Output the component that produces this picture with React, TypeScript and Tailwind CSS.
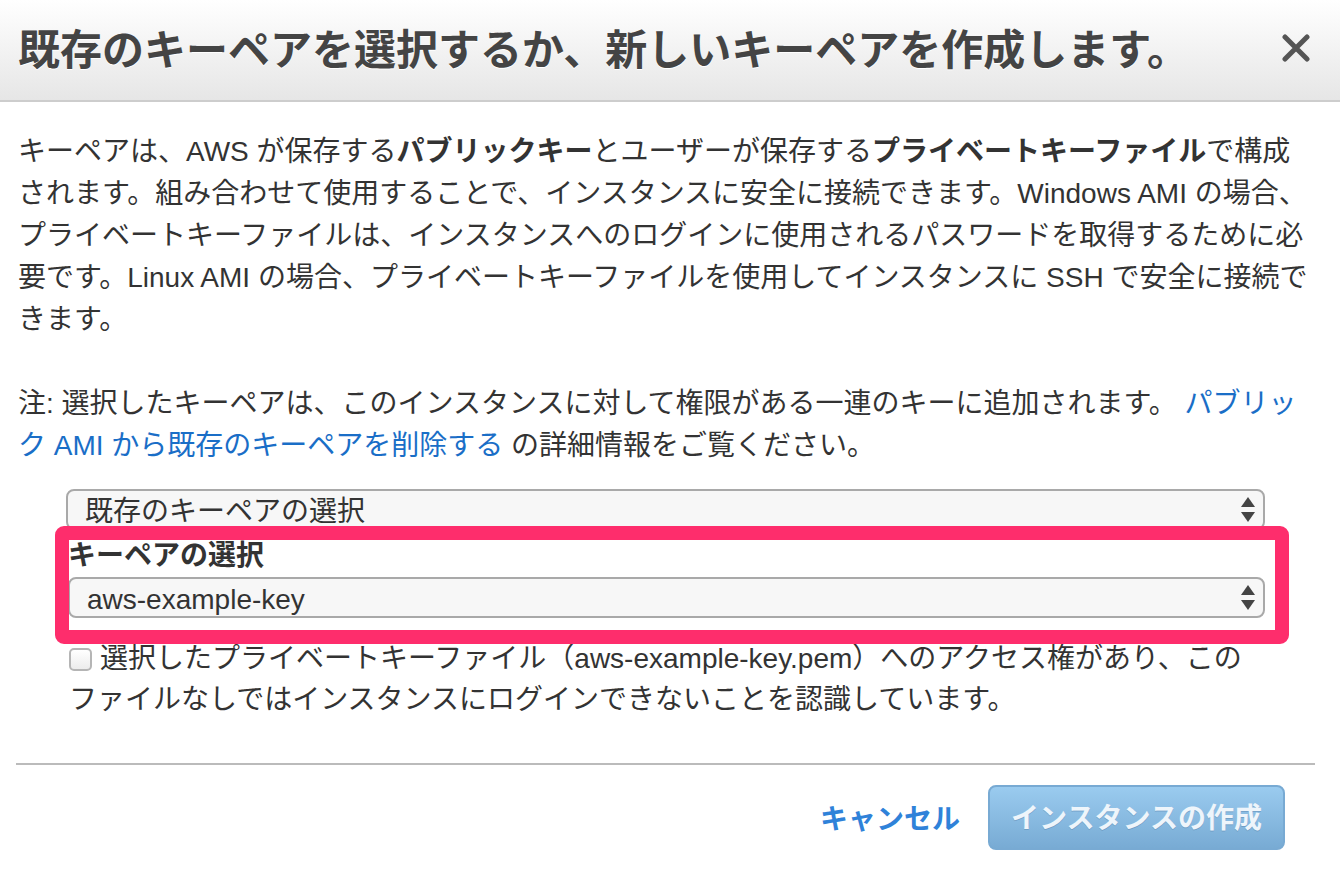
import React from 'react';

const font = { fontFamily: '"Liberation Sans", "Noto Sans CJK JP", sans-serif' };

// 上下の三角（セレクトボックスの矢印）
function SelectArrows() {
  return (
    <svg width="14" height="26" viewBox="0 0 14 26" className="shrink-0">
      <path d="M7 0 L14 10 L0 10 Z" fill="#444" />
      <path d="M0 15 L14 15 L7 25 Z" fill="#444" />
    </svg>
  );
}

function FakeSelect({ value }: { value: string }) {
  return (
    <div className="h-[41px] w-full rounded-[8px] border-2 border-[#a9a9a9] bg-[#f7f7f7] flex items-center justify-between pl-[17px] pr-[8px]">
      <span className="text-[28px] leading-none text-[#333] whitespace-nowrap pt-[4px]">{value}</span>
      <SelectArrows />
    </div>
  );
}

export default function App() {
  return (
    <div className="w-[1340px] h-[874px] bg-white overflow-hidden" style={font}>
      {/* ヘッダー */}
      <header className="h-[102px] border-b-2 border-[#cdcdcd] bg-gradient-to-b from-white to-[#e6e6e6] flex items-center justify-between pl-[18px] pr-[30px]">
        <h1
          className="text-[42px] font-bold text-[#444] leading-none whitespace-nowrap pt-[2px]"
          style={{ textShadow: '0 1px 0 #fff' }}
        >
          既存のキーペアを選択するか、新しいキーペアを作成します。
        </h1>
        <svg width="28" height="28" viewBox="0 0 28 28" className="mt-[-4px]">
          <path d="M3 3 L25 25 M25 3 L3 25" stroke="#555" strokeWidth="5" strokeLinecap="round" />
        </svg>
      </header>

      <div className="pl-[18px] pr-[20px] pt-[29px] text-[#333]">
        <p className="text-[28px] leading-[42px] whitespace-nowrap">
          キーペアは、AWS が保存する<b>パブリックキー</b>とユーザーが保存する<b>プライベートキーファイル</b>で構成<br />
          されます。組み合わせて使用することで、インスタンスに安全に接続できます。Windows AMI の場合、<br />
          プライベートキーファイルは、インスタンスへのログインに使用されるパスワードを取得するために必<br />
          要です。Linux AMI の場合、プライベートキーファイルを使用してインスタンスに SSH で安全に接続で<br />
          きます。
        </p>

        <p className="mt-[42px] text-[28px] leading-[42px] whitespace-nowrap">
          注: 選択したキーペアは、このインスタンスに対して権限がある一連のキーに追加されます。{' '}
          <a className="text-[#1a6ec7]">パブリッ<br />ク AMI から既存のキーペアを削除する</a> の詳細情報をご覧ください。
        </p>

        {/* フォーム部分 */}
        <div className="relative ml-[48px] w-[1199px] mt-[22px]">
          <FakeSelect value="既存のキーペアの選択" />
          <div className="mt-[5px] pl-[2px] text-[28px] leading-[42px] font-bold text-[#333]">キーペアの選択</div>
          <div className="pl-[2px]">
            <FakeSelect value="aws-example-key" />
          </div>

          {/* ハイライト枠 */}
          <div className="absolute left-[-11px] top-[37px] w-[1234px] h-[118px] border-[14px] border-[#fe2d6c] rounded-[9px] pointer-events-none" />

          <div className="mt-[20px] pl-[3px] text-[28px] leading-[41px] whitespace-nowrap">
            <span className="inline-block align-[-3px] w-[23px] h-[23px] mr-[8px] rounded-[5px] border-2 border-[#b5b5b5] bg-gradient-to-b from-white to-[#ececec]" />
            選択したプライベートキーファイル（aws-example-key.pem）へのアクセス権があり、この<br />
            ファイルなしではインスタンスにログインできないことを認識しています。
          </div>
        </div>
      </div>

      <div className="ml-[16px] mr-[25px] mt-[43px] h-[2px] bg-[#bbbbbb]" />

      {/* フッター */}
      <div className="flex items-center justify-end gap-[28px] mt-[20px] pr-[55px]">
        <span className="text-[28px] font-bold text-[#2f82d9] leading-none pt-[4px]">キャンセル</span>
        <button
          className="h-[65px] px-[21px] pt-[3px] rounded-[8px] border-2 border-[#78aad3] bg-gradient-to-b from-[#9acbef] to-[#78abd4] text-[28px] font-bold text-[#eef5fb] leading-none"
          style={{ textShadow: '0 1px 0 rgba(80,120,160,0.4)' }}
        >
          インスタンスの作成
        </button>
      </div>
    </div>
  );
}
